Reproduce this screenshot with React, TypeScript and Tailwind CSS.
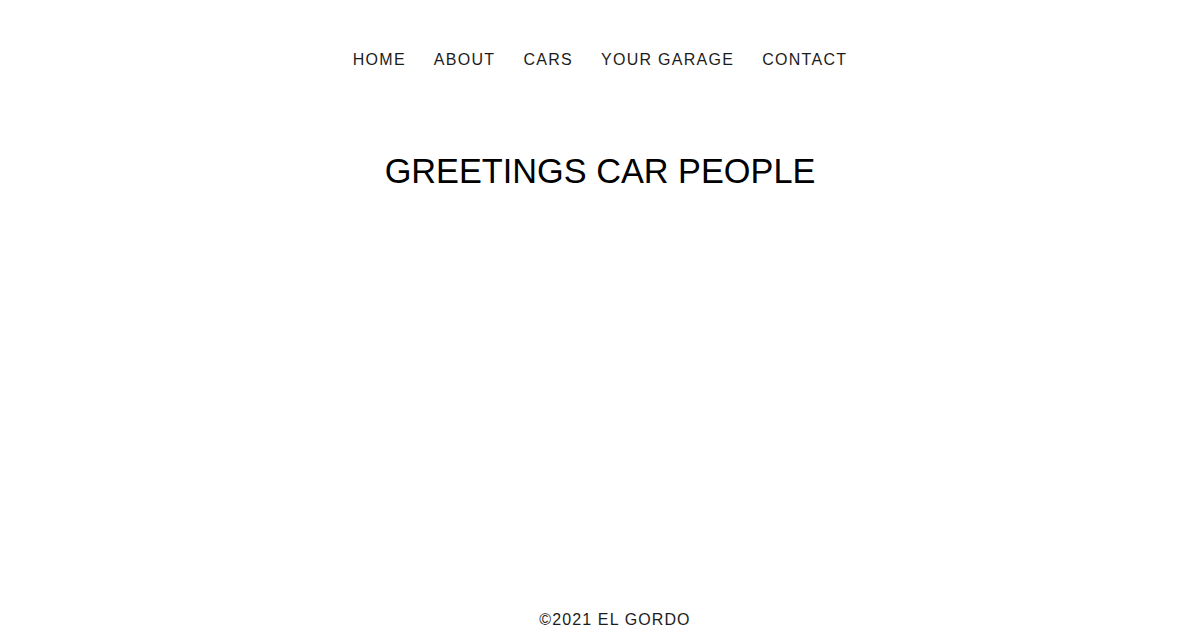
import React from 'react';

const links = ['HOME', 'ABOUT', 'CARS', 'YOUR GARAGE', 'CONTACT'];

const App: React.FC = () => {
  return (
    <div
      className="h-screen flex flex-col bg-white text-black overflow-hidden"
      style={{ fontFamily: '"Liberation Sans", Arial, sans-serif' }}
    >
      {/* Nav */}
      <nav className="pt-[48px] flex justify-center gap-[28px] text-[16px] leading-6 tracking-[0.08em] text-[#1c1c1c]">
        {links.map((link) => (
          <a key={link} href="#" className="hover:opacity-70">
            {link}
          </a>
        ))}
      </nav>

      {/* Hero */}
      <main className="flex-1 mt-[79px]">
        <h1 className="text-center text-[34.3px] leading-10 text-black">GREETINGS CAR PEOPLE</h1>
      </main>

      {/* Footer */}
      <footer className="flex justify-center pl-[30px] pt-px text-[16px] leading-5 tracking-[0.07em] text-[#1c1c1c]">
        ©2021 EL GORDO
      </footer>
    </div>
  );
};

export default App;
